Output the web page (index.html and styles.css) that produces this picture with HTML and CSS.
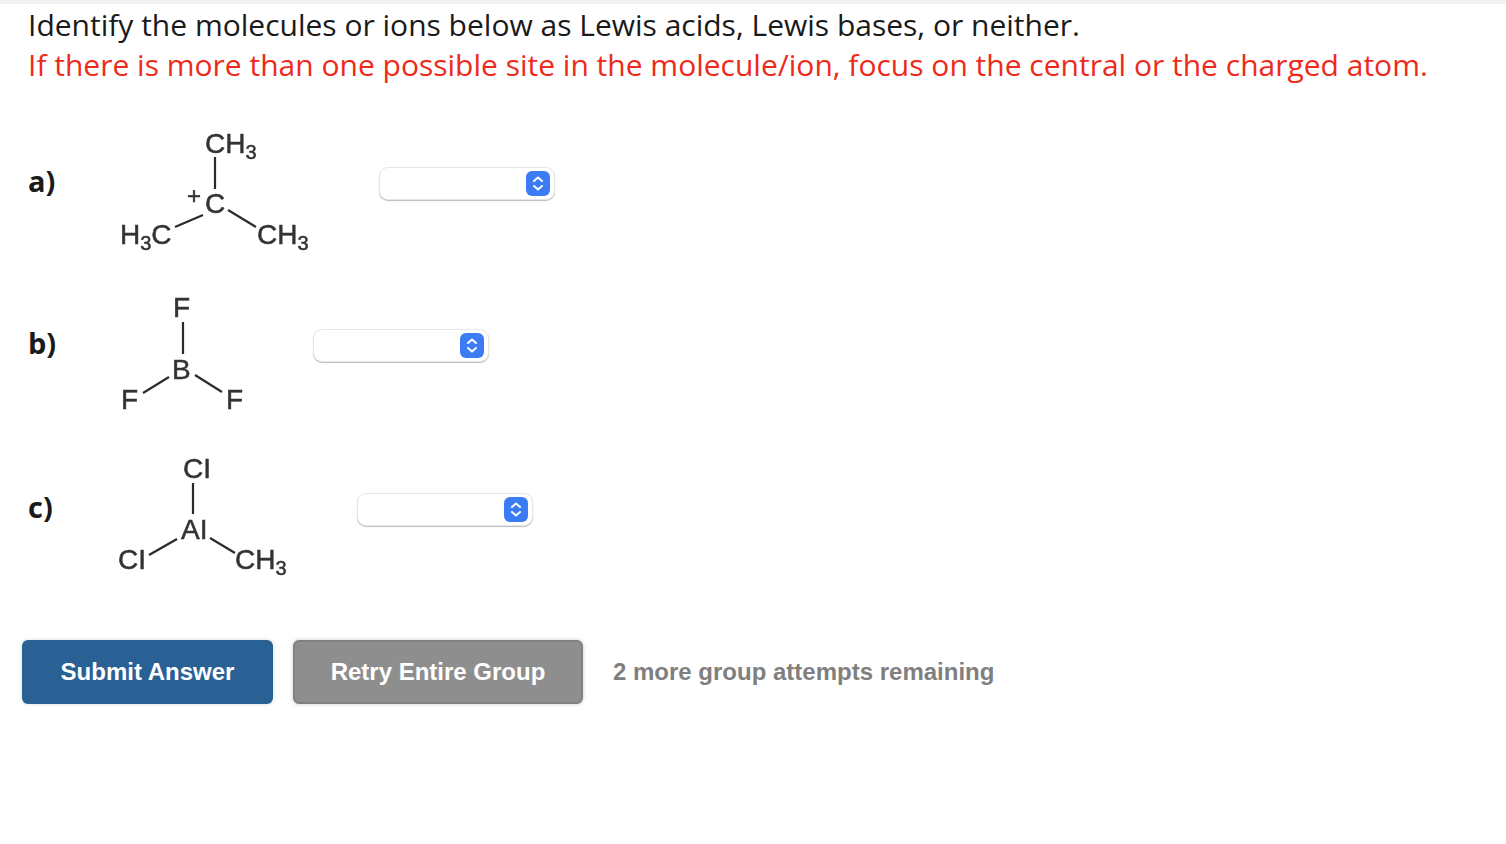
FILE: index.html
```html
<!DOCTYPE html>
<html lang="en">
<head>
<meta charset="utf-8">
<title>Lewis acids and bases</title>
<link rel="stylesheet" href="styles.css">
</head>
<body>
<div class="topbar"></div>
<div class="question">
  <p class="line">Identify the molecules or ions below as Lewis acids, Lewis bases, or neither.</p>
  <p class="line red">If there is more than one possible site in the molecule/ion, focus on the central or the charged atom.</p>
</div>
<div class="row row-a">
  <span class="label">a)</span>
  <svg class="mol" width="240" height="164" viewBox="100 102 240 164">
    <line x1="215" y1="157" x2="215" y2="189"/>
    <line x1="175" y1="227" x2="203" y2="215"/>
    <line x1="228" y1="210" x2="256" y2="227"/>
    <text x="205" y="153">CH<tspan class="sub" dy="6">3</tspan></text>
    <text class="plus" x="187" y="204">+</text>
    <text x="205" y="213">C</text>
    <text x="120" y="244">H<tspan class="sub" dy="6">3</tspan><tspan dy="-6">C</tspan></text>
    <text x="257" y="244">CH<tspan class="sub" dy="6">3</tspan></text>
  </svg>
  <div class="select sel-a"><svg class="stepper" width="24" height="25" viewBox="0 0 24 25"><rect width="24" height="25" rx="6"/><path d="M8 10l4-3.500 4 3.500M8 15l4 3.500 4-3.500"/></svg></div>
</div>
<div class="row row-b">
  <span class="label">b)</span>
  <svg class="mol" width="200" height="160" viewBox="100 266 200 160">
    <line x1="183" y1="322" x2="183" y2="354"/>
    <line x1="143" y1="393" x2="169" y2="377"/>
    <line x1="195" y1="375" x2="222" y2="392"/>
    <text x="173" y="317">F</text>
    <text x="172" y="379">B</text>
    <text x="121" y="409">F</text>
    <text x="226" y="409">F</text>
  </svg>
  <div class="select sel-b"><svg class="stepper" width="24" height="25" viewBox="0 0 24 25"><rect width="24" height="25" rx="6"/><path d="M8 10l4-3.500 4 3.500M8 15l4 3.500 4-3.500"/></svg></div>
</div>
<div class="row row-c">
  <span class="label">c)</span>
  <svg class="mol" width="230" height="168" viewBox="100 426 230 168">
    <line x1="193" y1="483" x2="193" y2="514"/>
    <line x1="149" y1="555" x2="177" y2="539"/>
    <line x1="210" y1="538" x2="235" y2="553"/>
    <text x="183" y="478">CI</text>
    <text x="181" y="539">AI</text>
    <text x="118" y="569">CI</text>
    <text x="235" y="569">CH<tspan class="sub" dy="6">3</tspan></text>
  </svg>
  <div class="select sel-c"><svg class="stepper" width="24" height="25" viewBox="0 0 24 25"><rect width="24" height="25" rx="6"/><path d="M8 10l4-3.500 4 3.500M8 15l4 3.500 4-3.500"/></svg></div>
</div>
<div class="actions">
  <button class="btn submit">Submit Answer</button>
  <button class="btn retry">Retry Entire Group</button>
  <span class="remaining">2 more group attempts remaining</span>
</div>
</body>
</html>
```
FILE: styles.css
```css
* { box-sizing: border-box; }
html, body { margin: 0; padding: 0; background: #fff; }
body { font-family: "Open Sans", sans-serif; color: #1a1a1a; height: 844px; overflow: hidden; }
.topbar { height: 4px; background: #f1f1f1; }
.question { padding: 1px 0 0 28px; margin-bottom: 17px; }
.line { margin: 0; font-size: 30px; line-height: 40px; white-space: nowrap; }
.red { color: #ee2a1b; }
.row { display: flex; align-items: center; padding-left: 28px; }
.row-a { height: 164px; }
.row-b { height: 160px; }
.row-c { height: 168px; }
.label { width: 72px; font-size: 29px; font-weight: 700; margin-bottom: 8px; }
.mol { display: block; flex: none; filter: blur(0.45px); }
.mol line { stroke: #2b2b2b; stroke-width: 2.2; }
.mol text { font-family: "Liberation Sans", sans-serif; font-size: 28px; fill: #333; stroke: #333; stroke-width: 0.5px; }
.mol .sub { font-size: 20px; }
.mol .plus { font-size: 24px; }
.select { width: 176px; height: 33px; flex: none; display: flex; justify-content: flex-end; align-items: center; padding-right: 4px; margin-bottom: 2px; background: #fff; border: 1px solid #e6e6e6; border-radius: 9px; box-shadow: 0 1px 1px #bdbdbd; }
.sel-a { margin-left: 39px; }
.sel-b { margin-left: 13px; }
.sel-c { margin-left: 27px; }
.stepper rect { fill: #3b7cf4; }
.stepper path { fill: none; stroke: #fff; stroke-width: 2; stroke-linecap: round; stroke-linejoin: round; }
.actions { display: flex; align-items: center; margin-top: 46px; padding-left: 22px; }
.btn { height: 64px; font-family: "Liberation Sans", sans-serif; font-size: 24px; font-weight: 700; color: #fff; border-radius: 6px; padding: 0; }
.submit { width: 251px; background: #2a6194; border: 0; box-shadow: 0 0 4px rgba(0,0,0,.15); }
.retry { width: 290px; margin-left: 20px; background: #8e8e8e; border: 2px solid #808080; box-shadow: 0 0 4px rgba(0,0,0,.2); }
.remaining { margin-left: 30px; font-family: "Liberation Sans", sans-serif; font-size: 24px; font-weight: 700; color: #7f7f7f; }
```
